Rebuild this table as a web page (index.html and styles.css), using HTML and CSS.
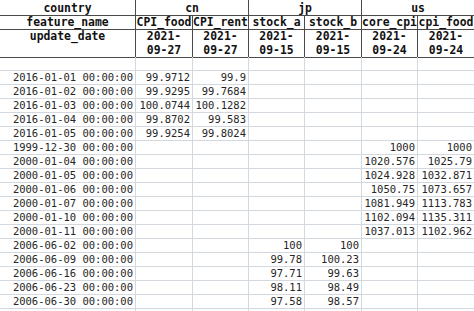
FILE: index.html
```html
<!DOCTYPE html>
<html>
<head>
<meta charset="utf-8">
<link rel="stylesheet" href="styles.css">
</head>
<body>
<div class="sheet">
  <div class="row r-h1">
    <div class="c hd">country</div>
    <div class="c hd span2">cn</div>
    <div class="c hd span2">jp</div>
    <div class="c hd span2">us</div>
  </div>
  <div class="row r-h2">
    <div class="c hd">feature_name</div>
    <div class="c hd">CPI_food</div>
    <div class="c hd">CPI_rent</div>
    <div class="c hd">stock_a</div>
    <div class="c hd">stock_b</div>
    <div class="c hd">core_cpi</div>
    <div class="c hd">cpi_food</div>
  </div>
  <div class="row r-h3">
    <div class="c hd">update_date</div>
    <div class="c hd">2021-<br>09-27</div>
    <div class="c hd">2021-<br>09-27</div>
    <div class="c hd">2021-<br>09-15</div>
    <div class="c hd">2021-<br>09-15</div>
    <div class="c hd">2021-<br>09-24</div>
    <div class="c hd">2021-<br>09-24</div>
  </div>
  <div class="row"><div class="c"></div><div class="c"></div><div class="c"></div><div class="c"></div><div class="c"></div><div class="c"></div><div class="c"></div></div>
  <div class="row"><div class="c">2016-01-01 00:00:00</div><div class="c">99.9712</div><div class="c">99.9</div><div class="c"></div><div class="c"></div><div class="c"></div><div class="c"></div></div>
  <div class="row"><div class="c">2016-01-02 00:00:00</div><div class="c">99.9295</div><div class="c">99.7684</div><div class="c"></div><div class="c"></div><div class="c"></div><div class="c"></div></div>
  <div class="row"><div class="c">2016-01-03 00:00:00</div><div class="c">100.0744</div><div class="c">100.1282</div><div class="c"></div><div class="c"></div><div class="c"></div><div class="c"></div></div>
  <div class="row"><div class="c">2016-01-04 00:00:00</div><div class="c">99.8702</div><div class="c">99.583</div><div class="c"></div><div class="c"></div><div class="c"></div><div class="c"></div></div>
  <div class="row"><div class="c">2016-01-05 00:00:00</div><div class="c">99.9254</div><div class="c">99.8024</div><div class="c"></div><div class="c"></div><div class="c"></div><div class="c"></div></div>
  <div class="row"><div class="c">1999-12-30 00:00:00</div><div class="c"></div><div class="c"></div><div class="c"></div><div class="c"></div><div class="c">1000</div><div class="c">1000</div></div>
  <div class="row"><div class="c">2000-01-04 00:00:00</div><div class="c"></div><div class="c"></div><div class="c"></div><div class="c"></div><div class="c">1020.576</div><div class="c">1025.79</div></div>
  <div class="row"><div class="c">2000-01-05 00:00:00</div><div class="c"></div><div class="c"></div><div class="c"></div><div class="c"></div><div class="c">1024.928</div><div class="c">1032.871</div></div>
  <div class="row"><div class="c">2000-01-06 00:00:00</div><div class="c"></div><div class="c"></div><div class="c"></div><div class="c"></div><div class="c">1050.75</div><div class="c">1073.657</div></div>
  <div class="row"><div class="c">2000-01-07 00:00:00</div><div class="c"></div><div class="c"></div><div class="c"></div><div class="c"></div><div class="c">1081.949</div><div class="c">1113.783</div></div>
  <div class="row"><div class="c">2000-01-10 00:00:00</div><div class="c"></div><div class="c"></div><div class="c"></div><div class="c"></div><div class="c">1102.094</div><div class="c">1135.311</div></div>
  <div class="row"><div class="c">2000-01-11 00:00:00</div><div class="c"></div><div class="c"></div><div class="c"></div><div class="c"></div><div class="c">1037.013</div><div class="c">1102.962</div></div>
  <div class="row"><div class="c">2006-06-02 00:00:00</div><div class="c"></div><div class="c"></div><div class="c">100</div><div class="c">100</div><div class="c"></div><div class="c"></div></div>
  <div class="row"><div class="c">2006-06-09 00:00:00</div><div class="c"></div><div class="c"></div><div class="c">99.78</div><div class="c">100.23</div><div class="c"></div><div class="c"></div></div>
  <div class="row"><div class="c">2006-06-16 00:00:00</div><div class="c"></div><div class="c"></div><div class="c">97.71</div><div class="c">99.63</div><div class="c"></div><div class="c"></div></div>
  <div class="row"><div class="c">2006-06-23 00:00:00</div><div class="c"></div><div class="c"></div><div class="c">98.11</div><div class="c">98.49</div><div class="c"></div><div class="c"></div></div>
  <div class="row"><div class="c">2006-06-30 00:00:00</div><div class="c"></div><div class="c"></div><div class="c">97.58</div><div class="c">98.57</div><div class="c"></div><div class="c"></div></div>
  <div class="row"><div class="c"></div><div class="c"></div><div class="c"></div><div class="c"></div><div class="c"></div><div class="c"></div><div class="c"></div></div>
</div>
</body>
</html>
```

FILE: styles.css
```css
html, body {
  margin: 0;
  padding: 0;
  background: #ffffff;
}
body {
  width: 474px;
  height: 311px;
  overflow: hidden;
}
.sheet {
  display: flex;
  flex-direction: column;
  width: 475px;
  font-family: "DejaVu Sans Mono", "Liberation Mono", monospace;
  font-size: 10.5px;
  color: #262626;
}
.row {
  display: grid;
  grid-template-columns: 136px 57px 56px 56px 57px 56px 57px;
  height: 14px;
}
.c {
  box-sizing: border-box;
  border-right: 1px solid #d3d7de;
  border-bottom: 1px solid #d3d7de;
  overflow: hidden;
  white-space: nowrap;
  text-align: right;
  padding-right: 2px;
  line-height: 13px;
}
.hd {
  font-weight: bold;
  font-size: 11.4px;
  color: #111;
  text-align: center;
  padding: 0;
  border-right-color: #4a4a4a;
  border-bottom-color: #4a4a4a;
  line-height: 13px;
  overflow-x: clip;
  overflow-y: visible;
}
.span2 {
  grid-column: span 2;
}
.r-h1 {
  height: 15px;
}
.r-h1 .hd {
  padding-top: 2px;
}
.r-h2 .hd {
  padding-top: 1px;
}
.r-h3 {
  height: 28px;
}
.r-h3 .hd {
  white-space: normal;
  line-height: 14px;
  padding-top: 0;
}
```
